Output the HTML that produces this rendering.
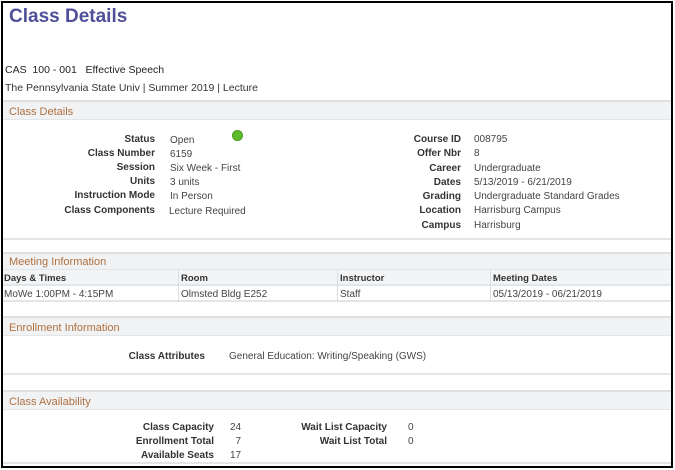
<!DOCTYPE html><html><head><style>
*{margin:0;padding:0;box-sizing:border-box}
body{width:675px;height:470px;background:#fff;position:relative;overflow:hidden;font-family:"Liberation Sans",sans-serif;font-size:10px;color:#333}
.frame{position:absolute;left:1px;top:1px;width:672px;height:467px;border:2px solid #000}
.a{position:absolute;white-space:nowrap}
.t{position:absolute;left:9px;top:6px;font-size:19px;font-weight:bold;color:#50509a}
.h{position:absolute;left:3px;width:668px;height:20px;background:#f0f2f4;border-top:2px solid #dde1e4;border-bottom:1px solid #e3e6e8;color:#b0703e;font-size:11px;padding:4px 0 0 6px}
.line{position:absolute;left:3px;width:668px;height:2px;background:#e3e6e8}
.l{position:absolute;font-weight:bold;text-align:right;white-space:nowrap;color:#333}
.v{position:absolute;white-space:nowrap;color:#444}
</style></head><body>
<div class="frame"></div>
<div class="t">Class Details</div>
<div class="a" style="left:5px;top:64px;font-size:10.5px;color:#222">CAS&nbsp; 100 - 001&nbsp;&nbsp; Effective Speech</div>
<div class="a" style="left:5px;top:82px;font-size:10.5px;color:#333">The Pennsylvania State Univ | Summer 2019 | Lecture</div>
<div class="h" style="top:100px">Class Details</div>

<div class="l" style="right:520px;top:133px;line-height:14px">Status<br>Class Number<br>Session<br>Units<br>Instruction Mode</div>
<div class="l" style="right:520px;top:205px">Class Components</div>
<div class="v" style="left:170px;top:134px;line-height:14px">Open<br>6159<br>Six Week - First<br>3 units<br>In Person</div>
<div class="v" style="left:169px;top:206px">Lecture Required</div>
<div style="position:absolute;left:232px;top:130px;width:11px;height:11px;border-radius:50%;background:#5fbb2a;border:1px solid #4a9a20"></div>

<div class="l" style="right:214px;top:133px;line-height:14.3px">Course ID<br>Offer Nbr<br>Career<br>Dates<br>Grading<br>Location<br>Campus</div>
<div class="v" style="left:474px;top:133px;line-height:14.3px">008795<br>8<br>Undergraduate<br>5/13/2019 - 6/21/2019<br>Undergraduate Standard Grades<br>Harrisburg Campus<br>Harrisburg</div>

<div class="line" style="top:238px"></div>
<div class="h" style="top:252px;height:18px;padding-top:2px">Meeting Information</div>
<div style="position:absolute;left:3px;top:270px;width:668px;height:16px;background:#f3f4f5;border-bottom:2px solid #e3e6e8"></div>
<div style="position:absolute;left:3px;top:286px;width:668px;height:16px;border-bottom:2px solid #e3e6e8"></div>
<div style="position:absolute;left:178px;top:270px;width:1px;height:32px;background:#dcdfe2"></div>
<div style="position:absolute;left:337px;top:270px;width:1px;height:32px;background:#dcdfe2"></div>
<div style="position:absolute;left:490px;top:270px;width:1px;height:32px;background:#dcdfe2"></div>
<div class="l" style="left:4px;top:273px;font-size:9.5px">Days &amp; Times</div>
<div class="l" style="left:181px;top:273px;font-size:9.5px">Room</div>
<div class="l" style="left:340px;top:273px;font-size:9.5px">Instructor</div>
<div class="l" style="left:493px;top:273px;font-size:9.5px">Meeting Dates</div>
<div class="v" style="left:4px;top:289px">MoWe 1:00PM - 4:15PM</div>
<div class="v" style="left:181px;top:289px">Olmsted Bldg E252</div>
<div class="v" style="left:340px;top:289px">Staff</div>
<div class="v" style="left:493px;top:289px">05/13/2019 - 06/21/2019</div>

<div class="h" style="top:316px">Enrollment Information</div>
<div class="l" style="right:470px;top:351px">Class Attributes</div>
<div class="v" style="left:229px;top:351px">General Education: Writing/Speaking (GWS)</div>
<div class="line" style="top:373px"></div>
<div class="h" style="top:390px">Class Availability</div>
<div class="l" style="right:461px;top:421px;line-height:14px">Class Capacity<br>Enrollment Total<br>Available Seats</div>
<div class="v" style="left:230px;top:421px;line-height:14px">24<br>&nbsp;&nbsp;7<br>17</div>
<div class="l" style="right:288px;top:421px;line-height:14px">Wait List Capacity<br>Wait List Total</div>
<div class="v" style="left:408px;top:421px;line-height:14px">0<br>0</div>
<div class="line" style="top:462px"></div>
</body></html>
